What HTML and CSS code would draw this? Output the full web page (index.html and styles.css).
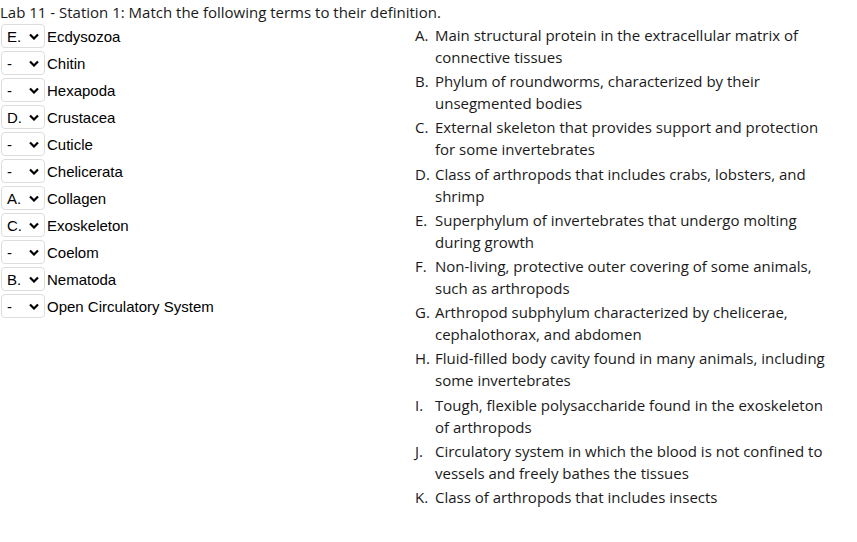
FILE: index.html
```html
<!DOCTYPE html>
<html lang="en">
  <head>
    <meta charset="UTF-8" />
    <meta name="viewport" content="width=device-width, initial-scale=1.0" />
    <title>Lab 11 - Station 1</title>
    <link rel="stylesheet" href="styles.css">
  </head>
  <body>
    <div class="title">Lab 11 - Station 1: Match the following terms to their definition.</div>
    <div class="match">
      <div class="terms">
        <div class="term">
          <select><option>-</option><option>A.</option><option>B.</option><option>C.</option><option>D.</option><option selected>E.</option></select>
          <span>Ecdysozoa</span>
        </div>
        <div class="term">
          <select><option selected>-</option><option>A.</option><option>B.</option></select>
          <span>Chitin</span>
        </div>
        <div class="term">
          <select><option selected>-</option><option>A.</option><option>B.</option></select>
          <span>Hexapoda</span>
        </div>
        <div class="term">
          <select><option>-</option><option selected>D.</option></select>
          <span>Crustacea</span>
        </div>
        <div class="term">
          <select><option selected>-</option><option>A.</option></select>
          <span>Cuticle</span>
        </div>
        <div class="term">
          <select><option selected>-</option><option>A.</option></select>
          <span>Chelicerata</span>
        </div>
        <div class="term">
          <select><option>-</option><option selected>A.</option></select>
          <span>Collagen</span>
        </div>
        <div class="term">
          <select><option>-</option><option selected>C.</option></select>
          <span>Exoskeleton</span>
        </div>
        <div class="term">
          <select><option selected>-</option><option>A.</option></select>
          <span>Coelom</span>
        </div>
        <div class="term">
          <select><option>-</option><option selected>B.</option></select>
          <span>Nematoda</span>
        </div>
        <div class="term">
          <select><option selected>-</option><option>A.</option></select>
          <span>Open Circulatory System</span>
        </div>
      </div>

      <ol class="defs">
        <li><b>A.</b><span>Main structural protein in the extracellular matrix of connective tissues</span></li>
        <li><b>B.</b><span>Phylum of roundworms, characterized by their unsegmented bodies</span></li>
        <li><b>C.</b><span>External skeleton that provides support and protection for some invertebrates</span></li>
        <li><b>D.</b><span>Class of arthropods that includes crabs, lobsters, and shrimp</span></li>
        <li><b>E.</b><span>Superphylum of invertebrates that undergo molting during growth</span></li>
        <li><b>F.</b><span>Non-living, protective outer covering of some animals, such as arthropods</span></li>
        <li><b>G.</b><span>Arthropod subphylum characterized by chelicerae, cephalothorax, and abdomen</span></li>
        <li><b>H.</b><span>Fluid-filled body cavity found in many animals, including some invertebrates</span></li>
        <li><b>I.</b><span>Tough, flexible polysaccharide found in the exoskeleton of arthropods</span></li>
        <li><b>J.</b><span>Circulatory system in which the blood is not confined to vessels and freely bathes the tissues</span></li>
        <li><b>K.</b><span>Class of arthropods that includes insects</span></li>
      </ol>
    </div>
  </body>
</html>
```

FILE: styles.css
```css
body {
  font-family: "Open Sans", sans-serif;
  margin: 0;
  padding: 0;
  background-color: #fff;
  color: #1a1a1a;
}
.title {
  font-size: 15px;
  line-height: 24px;
  height: 24px;
}
.match {
  display: flex;
  align-items: flex-start;
}
.terms {
  width: 415px;
  flex: none;
}
.term {
  display: flex;
  align-items: center;
  height: 24px;
  margin-bottom: 3px;
  font-family: "Liberation Sans", Arial, sans-serif;
  font-size: 15px;
  color: #000;
}
.term select {
  -webkit-appearance: none;
  appearance: none;
  width: 44px;
  height: 24px;
  margin: 0 2px 0 1px;
  padding: 0 0 0 5px;
  font-family: "Liberation Sans", Arial, sans-serif;
  font-size: 15px;
  color: #000;
  background-color: #fff;
  background-image: url("data:image/svg+xml,%3Csvg xmlns='http://www.w3.org/2000/svg' width='10' height='7' viewBox='0 0 10 7'%3E%3Cpath d='M1 1.5l4 4 4-4' fill='none' stroke='%23000' stroke-width='2.2'/%3E%3C/svg%3E");
  background-repeat: no-repeat;
  background-position: 27px center;
  border: 1px solid #ddd;
  border-radius: 4px;
}
.defs {
  list-style: none;
  margin: 0;
  padding: 0;
  width: 420px;
  font-size: 15px;
  line-height: 22px;
}
.defs li {
  display: grid;
  grid-template-columns: 20px 1fr;
  margin-bottom: 2.2px;
}
.defs b {
  font-weight: normal;
}
```
